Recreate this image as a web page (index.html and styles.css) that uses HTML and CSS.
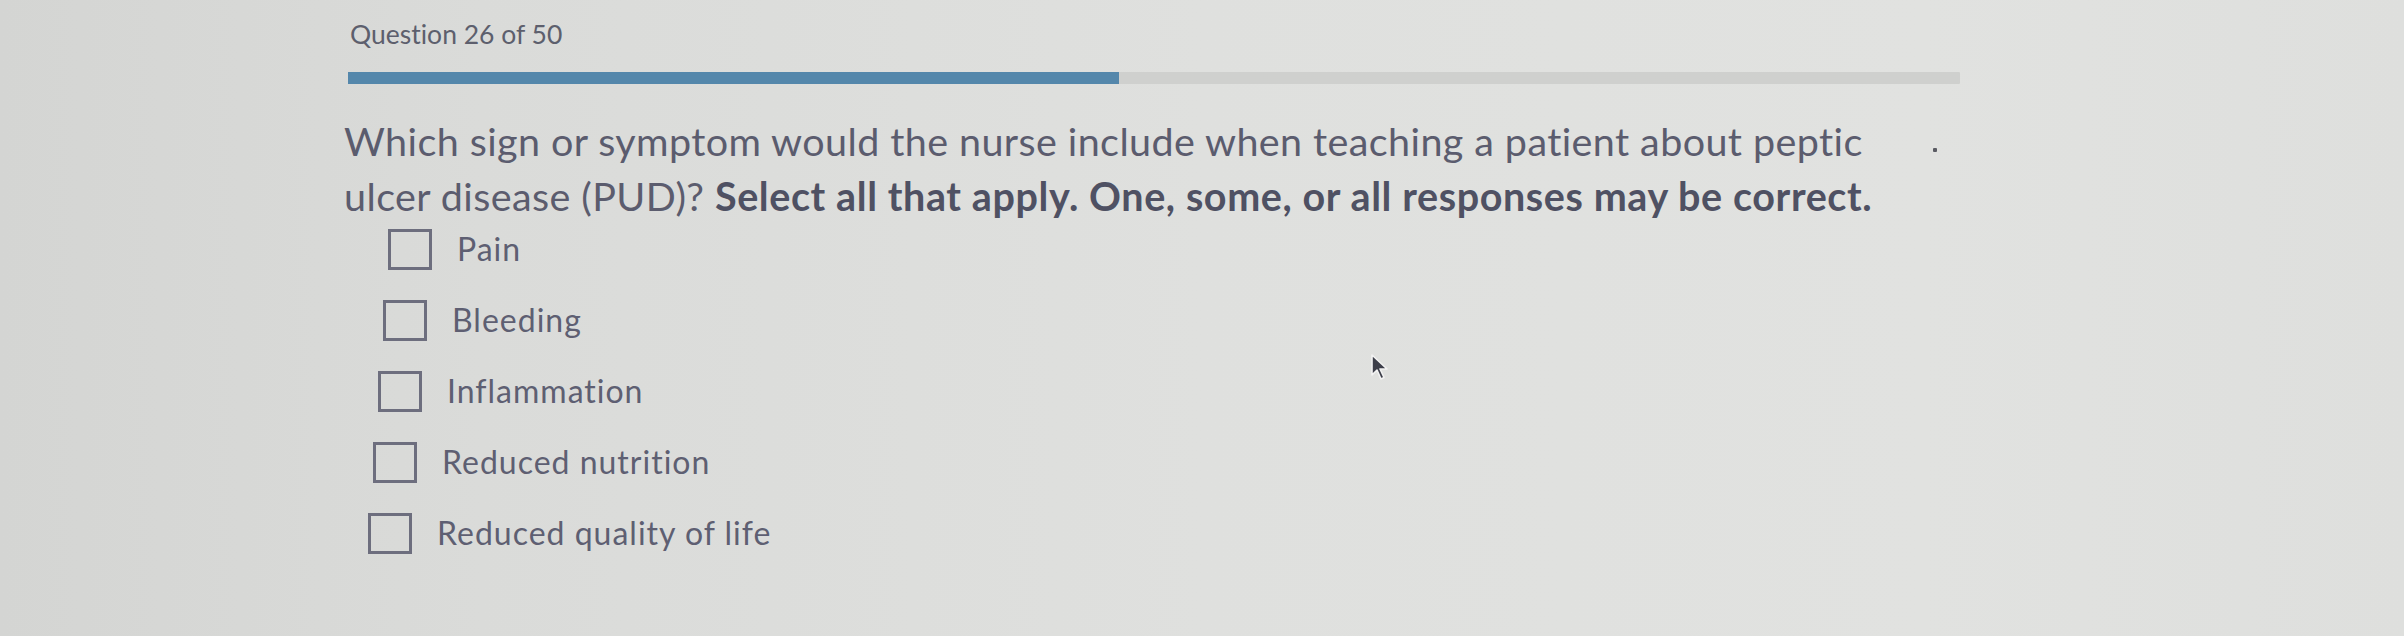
FILE: index.html
```html
<!DOCTYPE html>
<html lang="en">
<head>
<meta charset="utf-8">
<title>Question 26 of 50</title>
<link rel="stylesheet" href="styles.css">
</head>
<body>
<main class="page">
  <header class="head">
    <div class="counter">Question 26 of 50</div>
    <div class="track"><div class="fill" style="width: 47.8%"></div></div>
  </header>
  <section class="question">
    <p class="stem">Which sign or symptom would the nurse include when teaching a patient about peptic ulcer disease (PUD)? <strong>Select all that apply. One, some, or all responses may be correct.</strong></p>
    <ul class="options">
      <li class="option"><span class="box"></span><span class="label">Pain</span></li>
      <li class="option"><span class="box"></span><span class="label">Bleeding</span></li>
      <li class="option"><span class="box"></span><span class="label">Inflammation</span></li>
      <li class="option"><span class="box"></span><span class="label">Reduced nutrition</span></li>
      <li class="option"><span class="box"></span><span class="label">Reduced quality of life</span></li>
    </ul>
  </section>
  <span class="dot"></span>
  <svg class="cursor" width="20" height="28" viewBox="0 0 20 28" aria-hidden="true">
    <path d="M2 1 L2 21 L7 16 L11 25 L14 23.5 L10 15 L17 15 Z" fill="#3d3f4a" stroke="#f2f2f2" stroke-width="1.6" stroke-linejoin="round"/>
  </svg>
</main>
</body>
</html>
```

FILE: styles.css
```css
html, body {
  margin: 0;
  padding: 0;
}
body {
  width: 2404px;
  height: 636px;
  overflow: hidden;
  background: linear-gradient(90deg, #d4d5d3 0%, #dadbd9 20%, #dfe0de 50%, #e1e2e0 80%, #dedfdd 100%);
  font-family: Lato, "Open Sans", sans-serif;
  font-variant-ligatures: no-common-ligatures;
  color: #5b5c6b;
}
.page {
  position: relative;
  width: 2404px;
  height: 636px;
  padding: 18px 0 0 348px;
  box-sizing: border-box;
}
.head {
  width: 1612px;
}
.counter {
  font-size: 26.5px;
  line-height: 32px;
  color: #5d5f6d;
  padding-left: 2px;
}
.track {
  margin-top: 22px;
  height: 12px;
  background: #cfd0ce;
  border-radius: 1px;
}
.fill {
  height: 100%;
  background: #5487ab;
}
.question {
  margin-top: 29px;
}
.stem {
  margin: 0;
  width: 1600px;
  font-size: 39.5px;
  line-height: 55px;
  letter-spacing: 0.4px;
  color: #5b5c6e;
  margin-left: -4px;
}
.stem strong {
  font-weight: 700;
  letter-spacing: 0.6px;
  color: #4f5163;
}
.options {
  list-style: none;
  margin: 2px 0 0 0;
  padding: 0;
  display: flex;
  flex-direction: column;
  gap: 23px;
}
.option {
  display: flex;
  align-items: center;
  height: 48px;
  gap: 25px;
  font-size: 32px;
  letter-spacing: 1px;
  color: #5e5f72;
}
.option:nth-child(1) { padding-left: 40px; }
.option:nth-child(2) { padding-left: 35px; }
.option:nth-child(3) { padding-left: 30px; }
.option:nth-child(4) { padding-left: 25px; }
.option:nth-child(5) { padding-left: 20px; }
.box {
  width: 44px;
  height: 41px;
  box-sizing: border-box;
  border: 3px solid #6d6e7e;
  flex: none;
}
.label {
  line-height: 48px;
}
.dot {
  position: absolute;
  left: 1933px;
  top: 148px;
  width: 4px;
  height: 4px;
  background: #5a5b63;
  border-radius: 1px;
}
.cursor {
  position: absolute;
  left: 1370px;
  top: 354px;
}
```
